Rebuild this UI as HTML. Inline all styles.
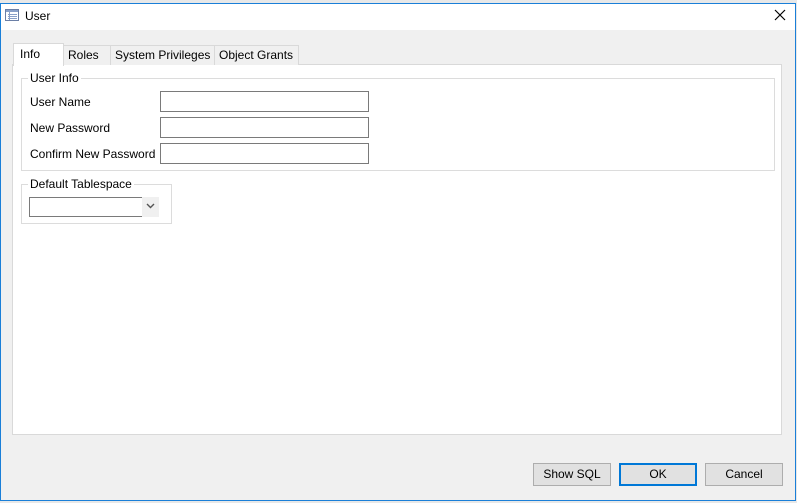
<!DOCTYPE html>
<html><head><meta charset="utf-8"><style>
*{box-sizing:border-box;margin:0;padding:0}
body{width:797px;height:503px;background:#e8e8e8;font-family:"Liberation Sans","Noto Sans CJK KR",sans-serif;font-size:12px;color:#000;position:relative;overflow:hidden}
.a{position:absolute}
.win{left:0;top:3px;width:796px;height:498px;background:#f0f0f0;border:1px solid #1a7fd8}
.title{left:1px;top:4px;width:794px;height:26px;background:#fff}
.inp{background:#fff;border:1px solid #7a7a7a;height:21px}
.grp{border:1px solid #dcdcdc}
.lg{background:#f0f0f0;padding:0 2px}
.tab{border:1px solid #d9d9d9;border-bottom:none;background:#f0f0f0;height:20px;top:45px;padding:2px 0 0 4px}
.btn{background:#e1e1e1;border:1px solid #adadad;height:23px;width:78px;text-align:center;line-height:21px;top:463px}
</style></head><body>
<div class="a win"></div>
<div class="a title"></div>
<svg class="a" style="left:5px;top:9px" width="14" height="12"><rect x="0.5" y="0.5" width="13" height="11" fill="#fff" stroke="#6b7fa6"/><rect x="1" y="1" width="12" height="2" fill="#8aa0c8"/><path d="M3 5.5h9M3 7.5h9M3 9.5h9M4.5 3v8" stroke="#8aa0c8"/></svg>
<div class="a" style="left:25px;top:9px">User</div>
<svg class="a" style="left:774px;top:9px" width="12" height="12"><path d="M1 1L11 11M11 1L1 11" stroke="#000" stroke-width="1.2"/></svg>
<div class="a" style="left:12px;top:64px;width:770px;height:371px;background:#fff;border:1px solid #d9d9d9"></div>
<div class="a tab" style="left:63px;width:48px">Roles</div>
<div class="a tab" style="left:110px;width:105px">System Privileges</div>
<div class="a tab" style="left:214px;width:85px">Object Grants</div>
<div class="a" style="left:13px;top:43px;width:51px;height:23px;background:#fff;border:1px solid #d9d9d9;border-bottom:none;padding:3px 0 0 6px">Info</div>
<div class="a grp" style="left:21px;top:78px;width:754px;height:93px;background:#fff"></div>
<div class="a" style="left:28px;top:71px;background:#fff;padding:0 2px">User Info</div>
<div class="a" style="left:30px;top:95px">User Name</div>
<div class="a" style="left:30px;top:121px">New Password</div>
<div class="a" style="left:30px;top:147px">Confirm New Password</div>
<div class="a inp" style="left:160px;top:91px;width:209px"></div>
<div class="a inp" style="left:160px;top:117px;width:209px"></div>
<div class="a inp" style="left:160px;top:143px;width:209px"></div>
<div class="a grp" style="left:21px;top:184px;width:151px;height:40px;background:#fff"></div>
<div class="a" style="left:28px;top:177px;background:#fff;padding:0 2px">Default Tablespace</div>
<div class="a inp" style="left:29px;top:197px;width:114px;height:20px"></div>
<div class="a" style="left:142px;top:197px;width:17px;height:20px;background:#f0f0f0"></div>
<svg class="a" style="left:146px;top:203px" width="9" height="6"><path d="M1 1L4.5 4.5L8 1" stroke="#555" stroke-width="1.4" fill="none"/></svg>
<div class="a btn" style="left:533px">Show SQL</div>
<div class="a btn" style="left:619px;border:2px solid #0078d7;line-height:19px">OK</div>
<div class="a btn" style="left:705px">Cancel</div>
</body></html>
